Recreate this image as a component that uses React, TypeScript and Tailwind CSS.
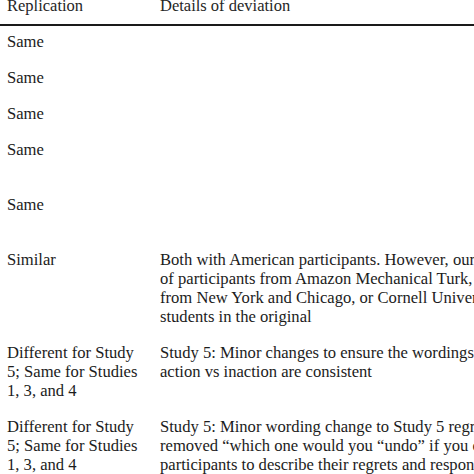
const rows: { rep: string[]; details: string[] }[] = [
  { rep: ["Same"], details: [] },
  { rep: ["Same"], details: [] },
  { rep: ["Same"], details: [] },
  { rep: ["Same", ""], details: [] },
  { rep: ["Same", ""], details: [] },
  {
    rep: ["Similar"],
    details: [
      "Both with American participants. However, our samples consisted",
      "of participants from Amazon Mechanical Turk, rather than residents",
      "from New York and Chicago, or Cornell University undergraduate",
      "students in the original",
    ],
  },
  {
    rep: ["Different for Study", "5; Same for Studies", "1, 3, and 4"],
    details: [
      "Study 5: Minor changes to ensure the wordings of the scenarios for",
      "action vs inaction are consistent",
    ],
  },
  {
    rep: ["Different for Study", "5; Same for Studies", "1, 3, and 4"],
    details: [
      "Study 5: Minor wording change to Study 5 regret question. We",
      "removed \u201cwhich one would you \u201cundo\u201d if you could\u201d and asked",
      "participants to describe their regrets and responses",
    ],
  },
];

export default function App() {
  return (
    <div className="w-[474px] h-[474px] overflow-hidden bg-white text-[#1c1c1c] font-['Liberation_Serif','Times_New_Roman',serif]">
      <div className="w-[760px]">
        <div className="grid grid-cols-[153px_1fr] pl-[7px] -mt-[4px] pb-[9px] text-[16.5px] leading-[19px] text-[#262626]">
          <div>Replication</div>
          <div>Details of deviation</div>
        </div>
        <div className="h-[2px] bg-[#1a1a1a]" />
        <div className="flex flex-col gap-[17px] pt-[6px] pl-[7px] text-[16.6px] leading-[19px]">
          {rows.map((r, i) => (
            <div key={i} className="grid grid-cols-[153px_1fr]">
              <div>
                {r.rep.map((l, j) => (
                  <div key={j} className="h-[19px] whitespace-nowrap">
                    {l}
                  </div>
                ))}
              </div>
              <div>
                {r.details.map((l, j) => (
                  <div key={j} className="h-[19px] whitespace-nowrap">
                    {l}
                  </div>
                ))}
              </div>
            </div>
          ))}
        </div>
      </div>
    </div>
  );
}
